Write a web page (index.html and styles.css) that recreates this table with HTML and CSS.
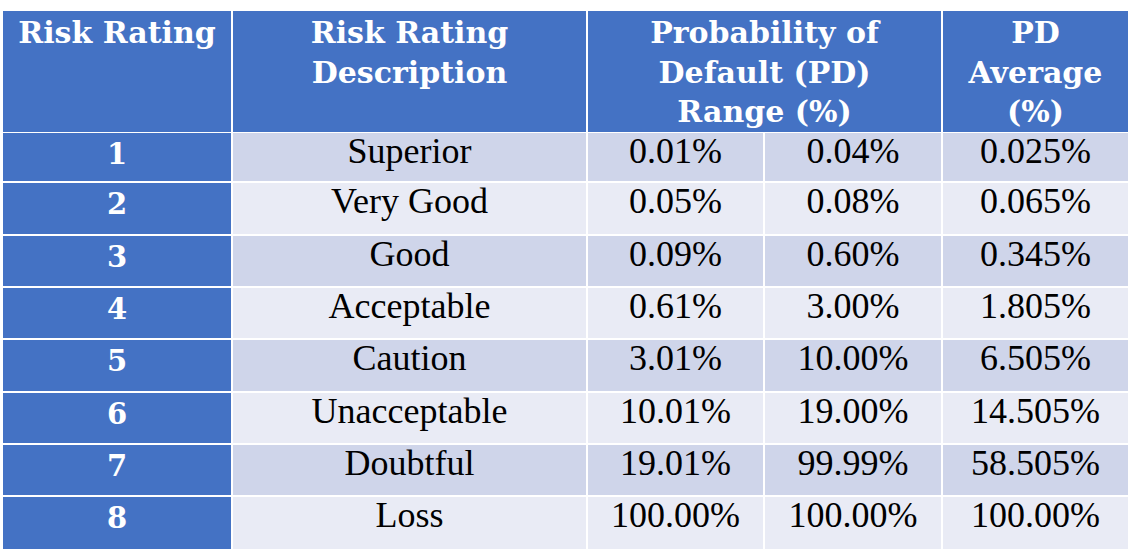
FILE: index.html
```html
<!DOCTYPE html>
<html lang="en">
<head>
<meta charset="utf-8">
<title>Risk Rating Table</title>
<link rel="stylesheet" href="styles.css">
</head>
<body>
<div class="table">
  <div class="thead">
    <div class="th">Risk Rating</div>
    <div class="th">Risk Rating<br>Description</div>
    <div class="th span2">Probability of<br>Default (PD)<br>Range (%)</div>
    <div class="th">PD<br>Average<br>(%)</div>
  </div>
  <div class="tbody">
    <div class="tr odd r1"><div class="rank">1</div><div class="td">Superior</div><div class="td">0.01%</div><div class="td">0.04%</div><div class="td">0.025%</div></div>
    <div class="tr even r2"><div class="rank">2</div><div class="td">Very Good</div><div class="td">0.05%</div><div class="td">0.08%</div><div class="td">0.065%</div></div>
    <div class="tr odd r3"><div class="rank">3</div><div class="td">Good</div><div class="td">0.09%</div><div class="td">0.60%</div><div class="td">0.345%</div></div>
    <div class="tr even r4"><div class="rank">4</div><div class="td">Acceptable</div><div class="td">0.61%</div><div class="td">3.00%</div><div class="td">1.805%</div></div>
    <div class="tr odd r5"><div class="rank">5</div><div class="td">Caution</div><div class="td">3.01%</div><div class="td">10.00%</div><div class="td">6.505%</div></div>
    <div class="tr even r6"><div class="rank">6</div><div class="td">Unacceptable</div><div class="td">10.01%</div><div class="td">19.00%</div><div class="td">14.505%</div></div>
    <div class="tr odd r7"><div class="rank">7</div><div class="td">Doubtful</div><div class="td">19.01%</div><div class="td">99.99%</div><div class="td">58.505%</div></div>
    <div class="tr even r8"><div class="rank">8</div><div class="td">Loss</div><div class="td">100.00%</div><div class="td">100.00%</div><div class="td">100.00%</div></div>
  </div>
</div>
</body>
</html>
```
FILE: styles.css
```css
html, body {
  margin: 0;
  background: #ffffff;
}
body {
  padding: 11px 0 0 3px;
}
.table {
  display: flex;
  flex-direction: column;
  gap: 6px;
  width: 1125px;
}
.thead {
  display: grid;
  grid-template-columns: 228px 353px 353px 185px;
  column-gap: 2px;
  height: 116px;
}
.th {
  background: #4472c4;
  color: #ffffff;
  font-family: "DejaVu Serif", serif;
  font-weight: bold;
  font-size: 30px;
  line-height: 39.5px;
  padding-top: 2px;
  text-align: center;
  white-space: nowrap;
}
.tbody {
  display: flex;
  flex-direction: column;
  gap: 2px;
}
.tr {
  display: grid;
  grid-template-columns: 228px 353px 175px 176px 185px;
  column-gap: 2px;
  height: 50px;
}
.r1 { height: 48px; }
.r2, .r5 { height: 51px; }
.r8 { height: 52px; }
.rank {
  background: #4472c4;
  color: #ffffff;
  font-family: "DejaVu Serif", serif;
  font-weight: bold;
  font-size: 29px;
  line-height: 40px;
  padding-top: 1px;
  text-align: center;
}
.td {
  font-family: "Liberation Serif", "Times New Roman", serif;
  font-size: 36px;
  line-height: 36px;
  color: #000000;
  text-align: center;
  white-space: nowrap;
}
.odd .td { background: #cfd5ea; }
.even .td { background: #e9ebf5; }
```
